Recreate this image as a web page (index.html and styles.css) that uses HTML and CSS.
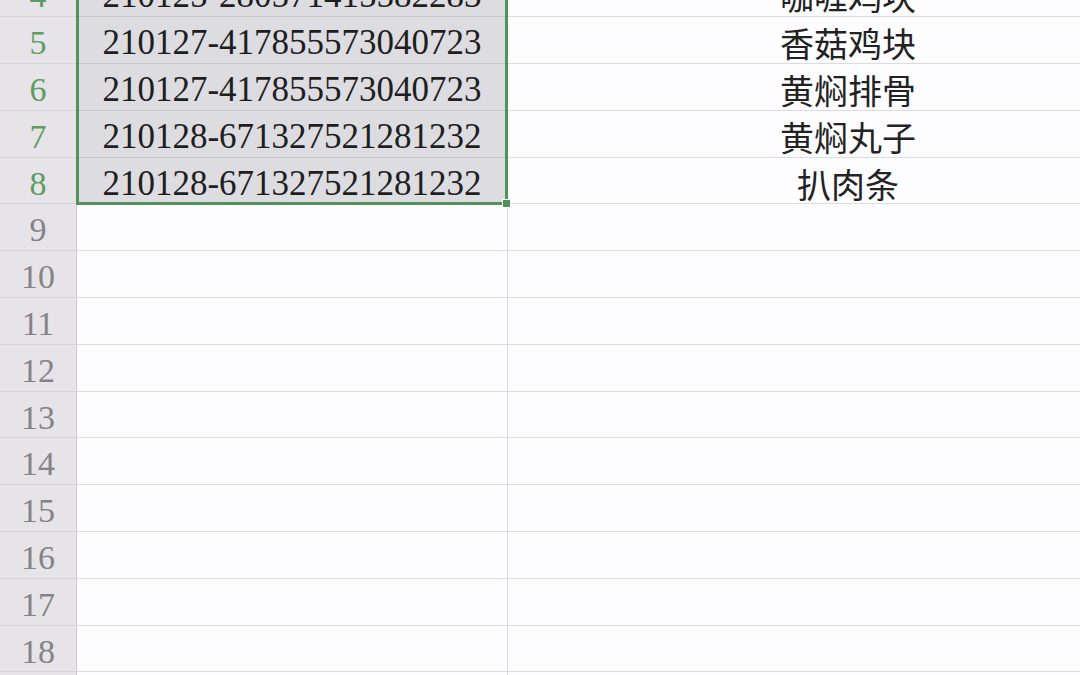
FILE: index.html
```html
<!DOCTYPE html>
<html lang="zh-CN">
<head>
<meta charset="utf-8">
<title>Sheet</title>
<link rel="stylesheet" href="styles.css">
</head>
<body>
<div class="viewport">
  <div class="sheet">
    <div class="rh sel">4</div><div class="ca sel">210125-280571415582283</div><div class="cb">咖喱鸡块</div>
    <div class="rh sel">5</div><div class="ca sel">210127-417855573040723</div><div class="cb">香菇鸡块</div>
    <div class="rh sel">6</div><div class="ca sel">210127-417855573040723</div><div class="cb">黄焖排骨</div>
    <div class="rh sel">7</div><div class="ca sel">210128-671327521281232</div><div class="cb">黄焖丸子</div>
    <div class="rh sel">8</div><div class="ca sel">210128-671327521281232</div><div class="cb">扒肉条</div>
    <div class="rh">9</div><div class="ca"></div><div class="cb"></div>
    <div class="rh">10</div><div class="ca"></div><div class="cb"></div>
    <div class="rh">11</div><div class="ca"></div><div class="cb"></div>
    <div class="rh">12</div><div class="ca"></div><div class="cb"></div>
    <div class="rh">13</div><div class="ca"></div><div class="cb"></div>
    <div class="rh">14</div><div class="ca"></div><div class="cb"></div>
    <div class="rh">15</div><div class="ca"></div><div class="cb"></div>
    <div class="rh">16</div><div class="ca"></div><div class="cb"></div>
    <div class="rh">17</div><div class="ca"></div><div class="cb"></div>
    <div class="rh">18</div><div class="ca"></div><div class="cb"></div>
    <div class="rh">19</div><div class="ca"></div><div class="cb"></div>
    <div class="selection"><span class="handle"></span></div>
  </div>
</div>
</body>
</html>
```

FILE: styles.css
```css
html, body {
  margin: 0;
  padding: 0;
  background: #fdfcfe;
}
.viewport {
  width: 1080px;
  height: 675px;
  overflow: hidden;
}
.sheet {
  position: relative;
  margin-top: -29.5px;
  display: grid;
  grid-template-columns: 77px 431px 680px;
  grid-auto-rows: 46.8px;
  width: 1188px;
}
.rh, .ca, .cb {
  box-sizing: border-box;
  display: flex;
  align-items: center;
  justify-content: center;
  border-bottom: 1px solid #dcdbdf;
  padding-top: 6px;
  white-space: nowrap;
  overflow: hidden;
}
.rh {
  background: #e6e4e8;
  border-right: 1px solid #c9c8cc;
  border-bottom-color: #d6d4d9;
  font-family: "Liberation Serif", "Times New Roman", serif;
  font-size: 34px;
  color: #858387;
}
.rh.sel {
  color: #5e9c62;
}
.ca {
  background: #fdfcfe;
  border-right: 1px solid #d9d8dc;
  font-family: "Liberation Serif", "Times New Roman", serif;
  font-size: 35px;
  color: #1e1e1e;
}
.ca.sel {
  background: #dddce1;
  border-bottom-color: #c8c7cc;
}
.cb {
  background: #fdfcfe;
  font-family: "Noto Sans CJK SC", "Noto Sans", sans-serif;
  font-size: 34px;
  color: #222222;
  padding-top: 5px;
}
.selection {
  position: absolute;
  left: 76px;
  width: 432px;
  top: -30px;
  height: 264px;
  box-sizing: border-box;
  border: 3px solid #52925a;
  pointer-events: none;
}
.handle {
  position: absolute;
  right: -6px;
  bottom: -6px;
  width: 7px;
  height: 7px;
  background: #52925a;
  border: 1px solid #fdfcfe;
}
```
